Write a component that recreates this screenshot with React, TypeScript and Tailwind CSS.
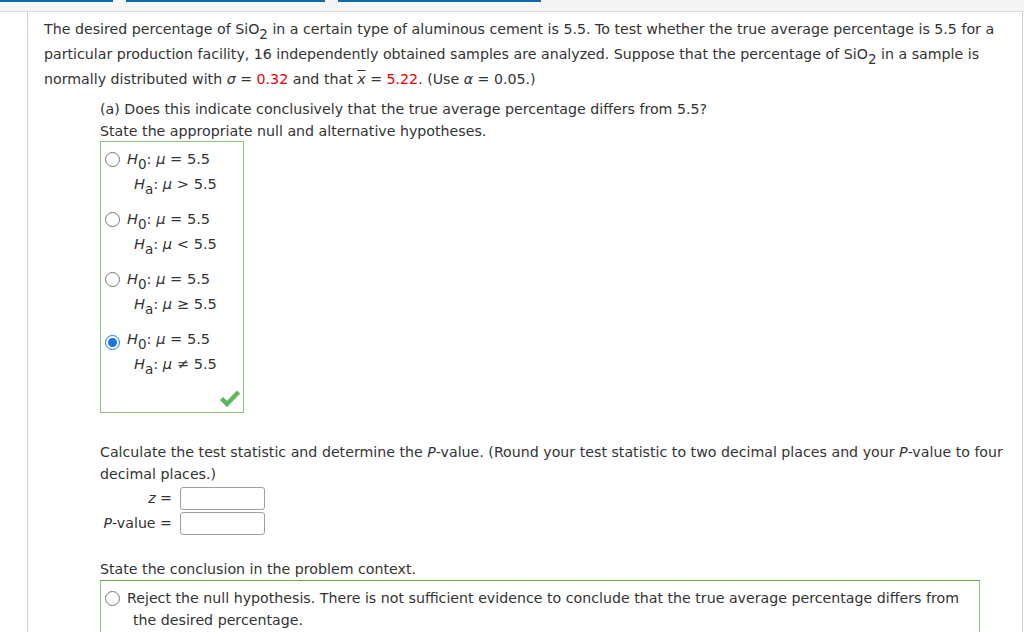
import React from 'react';

const font = { fontFamily: '"DejaVu Sans", Verdana, sans-serif' };

function Sub({ children }: { children: React.ReactNode }) {
  return <span className="relative top-[5px] text-[13.5px]">{children}</span>;
}

function Radio({ checked = false }: { checked?: boolean }) {
  return checked ? (
    <span className="inline-flex w-[15px] h-[15px] rounded-full border-[1.5px] border-[#1a73e8] items-center justify-center shrink-0">
      <span className="w-[9px] h-[9px] rounded-full bg-[#1a73e8]" />
    </span>
  ) : (
    <span className="inline-block w-[15px] h-[15px] rounded-full border border-[#767676] bg-white shrink-0" />
  );
}

function Hyp({ op, checked = false }: { op: string; checked?: boolean }) {
  return (
    <div className="flex items-start gap-[7px] text-[14.6px]">
      <div className="pt-[4px]">
        <Radio checked={checked} />
      </div>
      <div>
        <div className="h-[24px] leading-[24px]">
          <i>H</i>
          <Sub>0</Sub>: <i>μ</i> = 5.5
        </div>
        <div className="h-[26px] leading-[26px] pl-[7px]">
          <i>H</i>
          <Sub>a</Sub>: <i>μ</i> {op} 5.5
        </div>
      </div>
    </div>
  );
}

export default function App() {
  const options = [
    { op: '>' },
    { op: '<' },
    { op: '≥' },
    { op: '≠', checked: true },
  ];
  return (
    <div className="w-[1024px] h-[632px] overflow-hidden bg-white text-[#333] text-[14.2px]" style={font}>
      {/* top tab strip */}
      <div className="h-[12px] bg-[#f5f5f5] border-b border-[#dcdcdc]">
        <div className="flex gap-[13px] h-[2px]">
          <div className="w-[113px] bg-[#0b69a3]" />
          <div className="w-[199px] bg-[#0b69a3]" />
          <div className="w-[203px] bg-[#0b69a3]" />
        </div>
      </div>
      <div className="ml-[27px] w-[996px] border-l border-r border-[#d0d0d0] h-full pl-[16px] pr-[16px] pt-[5px]">
        <p className="leading-[25px]">
          The desired percentage of SiO<Sub>2</Sub> in a certain type of aluminous cement is 5.5. To test whether the true average percentage is 5.5 for a particular production facility, 16 independently obtained samples are analyzed. Suppose that the percentage of SiO<Sub>2</Sub> in a sample is normally distributed with <i>σ</i> = <span className="text-[#e60000]">0.32</span> and that <i className="overline">x</i> = <span className="text-[#e60000]">5.22</span>. (Use <i>α</i> = 0.05.)
        </p>
        <div className="pl-[56px] mt-[6px]">
          <p className="leading-[22px]">(a) Does this indicate conclusively that the true average percentage differs from 5.5?</p>
          <p className="leading-[22px]">State the appropriate null and alternative hypotheses.</p>
          <div className="w-[144px] h-[272px] border border-[#8cc47a] -mt-[1px] pt-[5px] pl-[4px] relative flex flex-col gap-[10px]">
            {options.map((o, i) => (
              <Hyp key={i} op={o.op} checked={o.checked} />
            ))}
            <svg className="absolute right-[2px] bottom-[5px]" width="22" height="18" viewBox="0 0 22 18">
              <path d="M2.5 9.5 L8 15 L19.5 3" fill="none" stroke="#5cb85c" strokeWidth="4.5" strokeLinejoin="miter" />
            </svg>
          </div>
          <p className="leading-[22px] mt-[28px]">
            Calculate the test statistic and determine the <i>P</i>-value. (Round your test statistic to two decimal places and your <i>P</i>-value to four decimal places.)
          </p>
          <div className="grid grid-cols-[72px_auto] gap-x-[8px] gap-y-[2px] mt-[2px] items-center w-fit">
            <span className="text-right"><i>z</i> =</span>
            <span className="block w-[85px] h-[23px] border border-[#a0a0a0] rounded-[3px] bg-white" />
            <span className="text-right"><i>P</i>-value =</span>
            <span className="block w-[85px] h-[23px] border border-[#a0a0a0] rounded-[3px] bg-white" />
          </div>
          <p className="leading-[22px] mt-[23px]">State the conclusion in the problem context.</p>
          <div className="w-[880px] border border-[#8cc47a] border-t-[#6aa84f] pl-[4px] pt-[6px] pb-[4px] flex items-start gap-[7px]">
            <div className="pt-[4px]">
              <Radio />
            </div>
            <p className="leading-[22px]">
              Reject the null hypothesis. There is not sufficient evidence to conclude that the true average percentage differs from
              <br />
              <span className="pl-[6px]">the desired percentage.</span>
            </p>
          </div>
        </div>
      </div>
    </div>
  );
}
